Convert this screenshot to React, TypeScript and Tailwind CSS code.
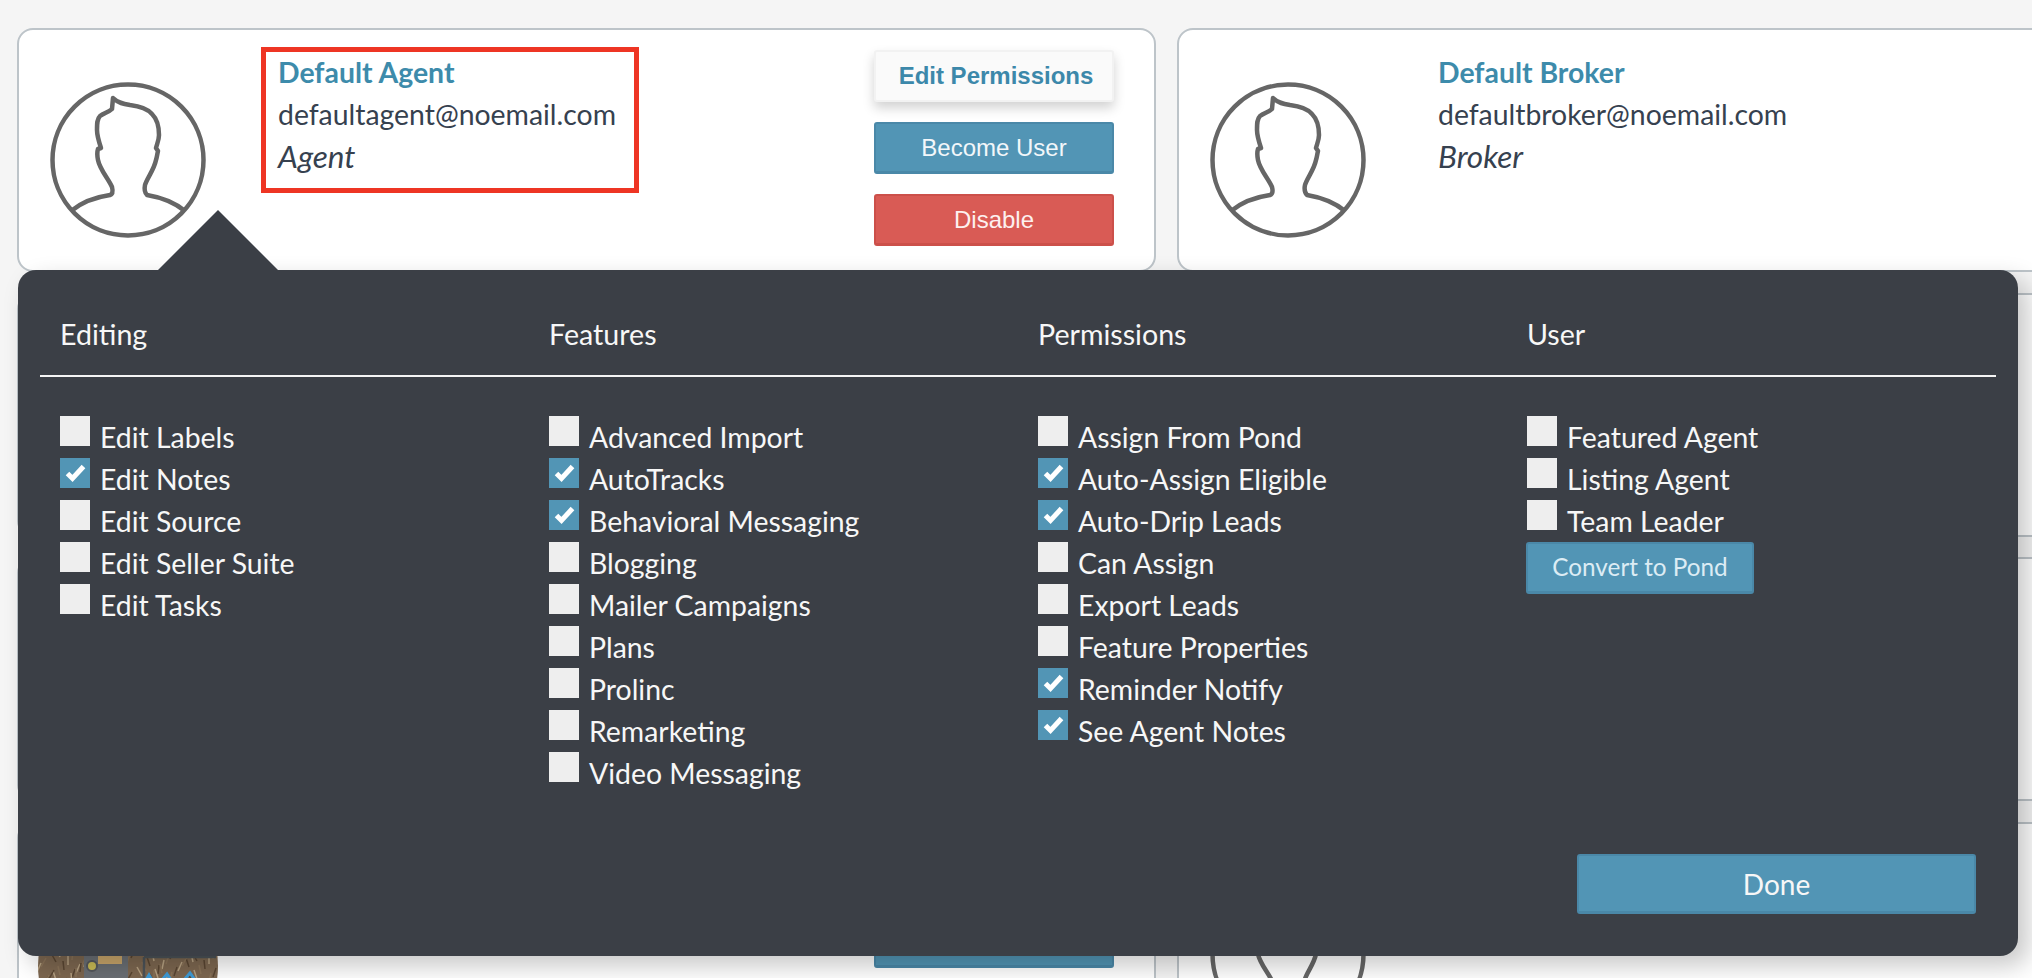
const COLUMNS: { title: string; items: [string, boolean][] }[] = [
  {
    title: "Editing",
    items: [
      ["Edit Labels", false],
      ["Edit Notes", true],
      ["Edit Source", false],
      ["Edit Seller Suite", false],
      ["Edit Tasks", false],
    ],
  },
  {
    title: "Features",
    items: [
      ["Advanced Import", false],
      ["AutoTracks", true],
      ["Behavioral Messaging", true],
      ["Blogging", false],
      ["Mailer Campaigns", false],
      ["Plans", false],
      ["Prolinc", false],
      ["Remarketing", false],
      ["Video Messaging", false],
    ],
  },
  {
    title: "Permissions",
    items: [
      ["Assign From Pond", false],
      ["Auto-Assign Eligible", true],
      ["Auto-Drip Leads", true],
      ["Can Assign", false],
      ["Export Leads", false],
      ["Feature Properties", false],
      ["Reminder Notify", true],
      ["See Agent Notes", true],
    ],
  },
  {
    title: "User",
    items: [
      ["Featured Agent", false],
      ["Listing Agent", false],
      ["Team Leader", false],
    ],
  },
]

function Avatar() {
  return (
    <svg
      viewBox="0 0 156 156"
      className="ml-[31px] mt-[52px] h-[156px] w-[156px] blur-[0.7px]"
      fill="none"
      stroke="#666666"
      strokeWidth="4.5"
      strokeLinejoin="round"
    >
      <circle cx="78" cy="78" r="75.5" />
      <path d="M21 129C32 120 46 115 60 113C63 112 63 109 62 105C58 96 50 88 48 78C47 73 47 70 48 67L51 66C49 60 47 54 47 48C47 41 47 37 50 34C54 31 59 30 62 27L63 16C68 21 74 22 80 23C88 24 97 26 102 32C107 37 109 45 109 53C109 58 107 62 106 66L108 69C107 73 107 75 106 78C104 88 97 96 95 103C94 108 95 111 97 113C109 115 124 120 135 129" />
    </svg>
  )
}

function Photo() {
  const blades = Array.from({ length: 90 }, (_, i) => {
    const x = (i * 37) % 180
    const y = 70 + ((i * 23) % 40)
    const d = (i * 13) % 11
    return (
      <path
        key={i}
        d={`M${x} ${y}l${d - 5} 9`}
        stroke={i % 3 === 0 ? "#b7a283" : i % 3 === 1 ? "#5a4632" : "#8a7358"}
        strokeWidth="1.5"
      />
    )
  })
  return (
    <svg
      viewBox="0 0 180 180"
      className="ml-[19px] mt-[52px] h-[180px] w-[180px] rounded-full"
    >
      <rect width="180" height="180" fill="#7d6750" />
      {blades}
      <rect x="46" y="70" width="44" height="40" rx="4" fill="#6b6f74" />
      <rect x="60" y="70" width="24" height="18" fill="#c9a66b" />
      <circle cx="54" cy="90" r="5" fill="#c9bb55" stroke="#55585c" strokeWidth="2" />
      <path d="M106 81h72M106 81v30" stroke="#4c5358" strokeWidth="2.5" fill="none" />
      <path d="M108 104l3-5 3 5M124 104l5-6 4 6M146 104l6-7 5 7" stroke="#3f9bd6" strokeWidth="3" fill="none" />
    </svg>
  )
}

function CardButtons({ disable }: { disable: boolean }) {
  return (
    <div className="flex w-[240px] flex-col gap-5 pt-5 [font-family:'Liberation_Sans',sans-serif] text-[24px]">
      <button className="h-[52px] rounded-[3px] border-2 border-[#f2f2f2] bg-[#fafafa] pl-1 font-bold text-[#3c88aa] shadow-[0_6px_12px_rgba(0,0,0,0.18)]">
        Edit Permissions
      </button>
      <button className="h-[52px] rounded-[3px] border-2 border-b-[3px] border-[#4a88a8] bg-[#5295b5] pt-[1px] text-[#f2f7fa]">
        Become User
      </button>
      {disable && (
        <button className="h-[52px] rounded-[3px] border-2 border-b-[3px] border-[#cc504a] bg-[#d95b55] pt-[1px] text-[#fdf0ef]">
          Disable
        </button>
      )}
    </div>
  )
}

function UserCard({
  name,
  email,
  role,
  photo,
  buttons,
  disable,
  highlight,
}: {
  name?: string
  email?: string
  role?: string
  photo?: boolean
  buttons?: boolean
  disable?: boolean
  highlight?: boolean
}) {
  return (
    <div className="relative grid h-[244px] grid-cols-[259px_1fr_auto] overflow-hidden rounded-2xl border-2 border-[#bdc4c9] bg-white pr-[40px]">
      <div>{photo ? <Photo /> : <Avatar />}</div>
      <div className="pt-[21px] text-[28.4px] leading-[42px] text-[#36414f]">
        {name && <div className="font-bold text-[#3d8bab]">{name}</div>}
        {email ? <div>{email}</div> : <div className="h-[42px]" />}
        {role && <div className="text-[31.5px] italic">{role}</div>}
      </div>
      <div>{buttons && <CardButtons disable={!!disable} />}</div>
      {highlight && (
        <div className="absolute left-[242px] top-[17px] h-[146px] w-[378px] border-[5px] border-[#ee3524]" />
      )}
    </div>
  )
}

function CheckRow({ label, checked }: { label: string; checked: boolean }) {
  return (
    <div className="flex h-[42px] gap-[10px]">
      <div
        className={
          checked
            ? "flex h-[30px] w-[30px] items-center justify-center bg-[#5295b5]"
            : "h-[30px] w-[30px] bg-[#eeeeee]"
        }
      >
        {checked && (
          <svg viewBox="0 0 30 30" className="h-[30px] w-[30px]" fill="none">
            <path d="M7.5 15.5L12.5 20.5L23.5 8.5" stroke="white" strokeWidth="5" />
          </svg>
        )}
      </div>
      <span className="text-[28.4px] leading-[42px] text-[#f7f7f7]">{label}</span>
    </div>
  )
}

function PermissionsPanel() {
  return (
    <div className="absolute left-[18px] top-[270px] flex h-[686px] w-[2000px] flex-col rounded-[18px] bg-[#3b3f46] px-[22px] pb-[42px] shadow-[10px_10px_25px_rgba(0,0,0,0.22)]">
      <div className="absolute -top-[60px] left-[140px] h-[60px] w-[120px] bg-[#3b3f46] [clip-path:polygon(50%_0,100%_100%,0_100%)]" />
      <div className="grid h-[107px] grid-cols-4 border-b-2 border-[#f5f5f5] pt-[43px] text-[28.6px] leading-[42px] text-[#f7f7f7]">
        {COLUMNS.map((col) => (
          <div key={col.title} className="pl-5">
            {col.title}
          </div>
        ))}
      </div>
      <div className="grid grid-cols-4 pt-[39px]">
        {COLUMNS.map((col) => (
          <div key={col.title} className="pl-5">
            {col.items.map(([label, checked]) => (
              <CheckRow key={label} label={label} checked={checked} />
            ))}
            {col.title === "User" && (
              <button className="-ml-[1px] h-[52px] w-[228px] rounded-[3px] border-2 border-b-[3px] border-[#4a88a8] bg-[#5295b5] text-[24.3px] text-[#dcecf4]">
                Convert to Pond
              </button>
            )}
          </div>
        ))}
      </div>
      <div className="mt-auto flex justify-end pr-5">
        <button className="h-[60px] w-[399px] rounded-[3px] border-2 border-b-[3px] border-[#4a88a8] bg-[#5295b5] text-[28px] text-[#f7f7f7]">
          Done
        </button>
      </div>
    </div>
  )
}

export default function App() {
  return (
    <div className="relative h-[978px] w-[2032px] overflow-hidden bg-[#f5f5f5] pl-[17px] pt-[28px] [font-family:Lato,sans-serif]">
      <div className="grid w-[2299px] grid-cols-[1139px_1139px] gap-x-[21px] gap-y-[20.5px]">
        <UserCard
          name="Default Agent"
          email="defaultagent@noemail.com"
          role="Agent"
          buttons
          disable
          highlight
        />
        <UserCard
          name="Default Broker"
          email="defaultbroker@noemail.com"
          role="Broker"
        />
        <UserCard />
        <UserCard />
        <UserCard />
        <UserCard />
        <UserCard role="Broker" photo buttons />
        <UserCard role="(Pond Account) Partner" />
      </div>
      <PermissionsPanel />
    </div>
  )
}
